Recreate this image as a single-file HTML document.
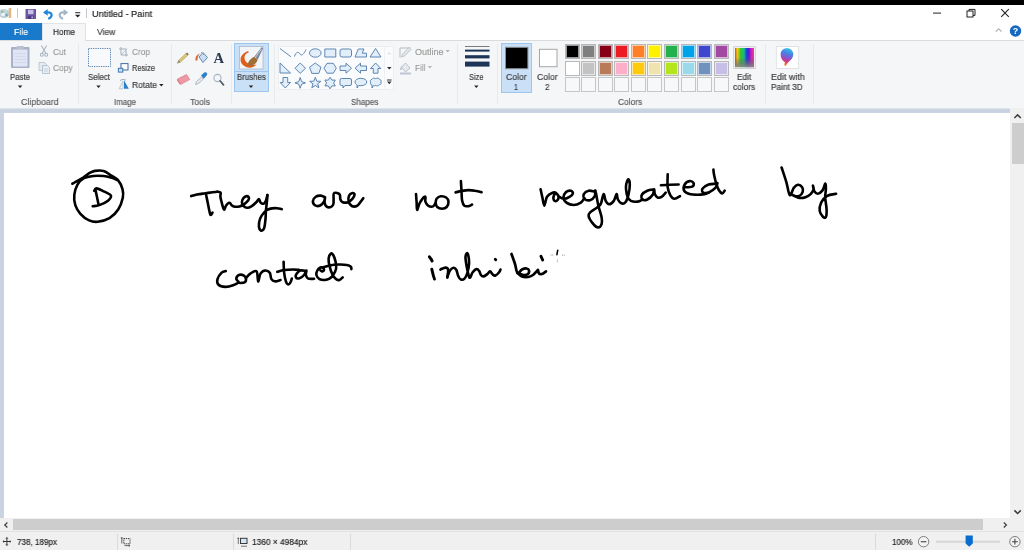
<!DOCTYPE html>
<html>
<head>
<meta charset="utf-8">
<style>
*{box-sizing:border-box;margin:0;padding:0}
html,body{width:1024px;height:550px;overflow:hidden;background:#fff;font-family:"Liberation Sans",sans-serif;}
#root{position:fixed;left:0;top:0;width:1024px;height:550px;overflow:hidden;background:#fff}
.abs{position:absolute}
.t{-webkit-text-stroke:0.18px currentColor;will-change:transform;position:absolute;white-space:nowrap;font-size:9px;color:#444;line-height:10px;transform-origin:0 50%}
svg{position:absolute;overflow:visible;will-change:transform}
#topbar{left:0;top:0;width:1024px;height:5px;background:#000}
#title{left:0;top:5px;width:1024px;height:18px;background:#fff}
#tabs{left:0;top:23px;width:1024px;height:17px;background:#fff}
#filetab{left:0;top:23px;width:42px;height:17px;background:#1979ca}
#hometab{left:42px;top:23px;width:44px;height:18px;background:#f5f6f7;border:1px solid #e2e3e4;border-bottom:none}
#ribbon{left:0;top:40px;width:1024px;height:68px;background:#f5f6f7;border-top:1px solid #dadbdc}
#band{left:0;top:108px;width:1010px;height:5px;background:linear-gradient(#dfe4ec 0,#dfe4ec 1px,#c9d3e2 1px,#c7d1e0 5px)}
#work{left:0;top:112px;width:1010px;height:406px;background:#c9d3e2}
#canvas{left:4px;top:113px;width:1006px;height:405px;background:#fff}
#vscroll{left:1010px;top:108px;width:14px;height:410px;background:#f0f0f0}
#vthumb{left:1012px;top:123px;width:12px;height:41px;background:#cdcdcd}
#hscroll{left:0;top:518px;width:1010px;height:13px;background:#f0f0f0}
#hthumb{left:13px;top:519px;width:970px;height:10.5px;background:#cdcdcd}
#corner{left:1010px;top:518px;width:14px;height:13px;background:#f0f0f0}
#status{left:0;top:531px;width:1024px;height:19px;background:#f0f0f0;border-top:1px solid #e2e2e2}
.sep{position:absolute;top:44px;width:1px;height:60px;background:#e9eaeb}
.ssep{position:absolute;top:534px;width:1px;height:16px;background:#dadada}
.sw{position:absolute;width:15px;height:15px;border:1px solid #b8b8b8;box-shadow:inset 0 0 0 1px rgba(255,255,255,0.6)}
.sw0{position:absolute;width:15px;height:15px;border:1px solid #c6c6c6;background:#f7f8f9}
</style>
</head>
<body>
<div id="root">
<div class="abs" id="topbar"></div>
<div class="abs" id="title"></div>
<div class="abs" id="tabs"></div>
<div class="abs" id="filetab"></div>
<div class="abs" id="ribbon"></div>
<div class="abs" id="hometab"></div>
<div class="abs" id="band"></div>
<div class="abs" id="work"></div>
<div class="abs" id="canvas"></div>
<div class="abs" id="vscroll"></div>
<div class="abs" id="vthumb"></div>
<div class="abs" id="hscroll"></div>
<div class="abs" id="hthumb"></div>
<div class="abs" id="corner"></div>
<div class="abs" id="status"></div>
<!-- separators -->
<div class="sep" style="left:78px"></div>
<div class="sep" style="left:171px"></div>
<div class="sep" style="left:231px"></div>
<div class="sep" style="left:274px"></div>
<div class="sep" style="left:457px"></div>
<div class="sep" style="left:497px"></div>
<div class="sep" style="left:765px"></div>
<div class="sep" style="left:813px"></div>
<!-- highlighted buttons -->
<div class="abs" style="left:234px;top:43px;width:35px;height:49px;background:#c9e0f7;border:1px solid #9cc6ee"></div>
<div class="abs" style="left:235px;top:71px;width:33px;height:1px;background:#9cc6ee"></div>
<div class="abs" style="left:501px;top:43px;width:31px;height:50px;background:#c9e0f7;border:1px solid #9cc6ee"></div>
<!-- shapes gallery -->
<div class="abs" style="left:278px;top:46px;width:116px;height:44px;background:#fafbfc;border:1px solid #eceef0"></div>
<div class="abs" style="left:384px;top:47px;width:1px;height:42px;background:#eff0f2"></div>
<svg width="1024" height="550" viewBox="0 0 1024 550" style="left:0;top:0">
<defs>
<linearGradient id="rb" x1="0" x2="1" y1="0" y2="0">
<stop offset="0" stop-color="#f03a1c"/><stop offset="0.12" stop-color="#f8d810"/><stop offset="0.3" stop-color="#30d028"/><stop offset="0.48" stop-color="#18c090"/><stop offset="0.6" stop-color="#1848e0"/><stop offset="0.72" stop-color="#5a18d8"/><stop offset="0.86" stop-color="#e018d0"/><stop offset="1" stop-color="#f04878"/>
</linearGradient>
<linearGradient id="rbk" x1="0" x2="0" y1="0" y2="1">
<stop offset="0" stop-color="#000" stop-opacity="0"/><stop offset="0.5" stop-color="#555" stop-opacity="0.12"/><stop offset="0.85" stop-color="#777" stop-opacity="0.75"/><stop offset="1" stop-color="#8a8a8a" stop-opacity="0.95"/>
</linearGradient>
<linearGradient id="p3d" x1="0.6" x2="0.35" y1="0" y2="1">
<stop offset="0" stop-color="#35bcea"/><stop offset="0.3" stop-color="#4a7fe0"/><stop offset="0.55" stop-color="#9050c8"/><stop offset="0.76" stop-color="#e03868"/><stop offset="1" stop-color="#f5a520"/>
</linearGradient>
</defs>
<!-- title bar: paint icon -->
<g>
<ellipse cx="4" cy="13.6" rx="5.8" ry="4.6" fill="#c2d0db"/>
<ellipse cx="3.2" cy="14.6" rx="2" ry="1.5" fill="#f2f5f7"/>
<circle cx="2.2" cy="11.6" r="1.2" fill="#8fbf7a"/><circle cx="5.6" cy="10.6" r="1.2" fill="#c8dbe8"/><circle cx="6.6" cy="15" r="1.5" fill="#79adc4"/>
<rect x="8.8" y="8.2" width="2.4" height="9.8" fill="#e6b877"/><rect x="8.8" y="8.2" width="2.4" height="2" fill="#d9b98a"/>
</g>
<rect x="17" y="8.5" width="1" height="9.5" fill="#c4c4cc"/>
<rect x="86" y="8.5" width="1" height="9.5" fill="#c4c4cc"/>
<!-- save -->
<g>
<rect x="25.5" y="9" width="10.5" height="10" fill="#6d55a3"/>
<rect x="28" y="9.8" width="5.5" height="4.4" fill="#c9c0e6"/>
<rect x="28" y="15.8" width="5.5" height="3.2" fill="#4d3a80"/>
<rect x="31.5" y="16.4" width="1.3" height="2" fill="#c9c0e6"/>
</g>
<!-- undo -->
<path d="M47 12.4 C50.4 11.9 52 13.8 51.6 15.6 C51.2 17.4 49.9 18.4 48.2 18.8" stroke="#1f86d8" stroke-width="2.2" fill="none"/>
<path d="M43 12.4 L47.7 9 L47.7 15.7 Z" fill="#1f86d8"/>
<!-- redo -->
<path d="M64.3 12.4 C60.9 11.9 59.3 13.8 59.7 15.6 C60.1 17.4 61.4 18.4 63.1 18.8" stroke="#a3b6c9" stroke-width="2.2" fill="none"/>
<path d="M68.3 12.4 L63.6 9 L63.6 15.7 Z" fill="#a3b6c9"/>
<!-- qat dropdown -->
<rect x="75.2" y="12.2" width="5" height="1" fill="#222"/>
<path d="M75 14.7 L80.4 14.7 L77.7 17.4 Z" fill="#222"/>
<!-- window controls -->
<rect x="933" y="12.6" width="8" height="1" fill="#222"/>
<rect x="967" y="11" width="6" height="6" fill="#fff" stroke="#222" stroke-width="1"/>
<path d="M969 11 L969 9.4 L975 9.4 L975 15.4 L973 15.4" fill="none" stroke="#222" stroke-width="1"/>
<path d="M1001.2 9.2 L1008.8 16.8 M1008.8 9.2 L1001.2 16.8" stroke="#222" stroke-width="1.1" fill="none"/>
<!-- help + caret -->
<circle cx="1015.5" cy="31" r="5.7" fill="#1468c0"/>
<text x="1015.5" y="34.3" font-size="9" font-weight="bold" fill="#fff" text-anchor="middle" font-family="Liberation Sans">?</text>
<path d="M995.8 31.6 L998.7 28.8 L1001.6 31.6" stroke="#b4b4b4" stroke-width="1.3" fill="none"/>
<!-- paste icon -->
<g>
<rect x="11" y="47" width="18.5" height="21" rx="1" fill="#a9b1c6"/>
<rect x="13" y="49.5" width="14.5" height="17" fill="#dfe5f5"/>
<rect x="16.5" y="46" width="7.5" height="3" rx="1" fill="#b9c0d2"/>
<path d="M14.5 53.5H26M14.5 56.5H26M14.5 59.5H26M14.5 62.5H26" stroke="#cfd6ea" stroke-width="0.8"/>
</g>
<path d="M17.9 85.4 L22.3 85.4 L20.1 87.9 Z" fill="#222"/>
<!-- cut -->
<g stroke="#a7b3c2" fill="none" stroke-width="1.05">
<path d="M41.3 45.5 L46 53.5 M46.6 45.5 L42 53.5"/>
<circle cx="41.8" cy="54.8" r="1.5"/><circle cx="46.2" cy="54.8" r="1.5"/>
</g>
<!-- copy -->
<g>
<path d="M39 62.5 H44.5 L46.5 64.5 V70.5 H39 Z" fill="#e6ebf2" stroke="#b3bfcd" stroke-width="0.8"/>
<path d="M42.5 65.5 H47.5 L49.5 67.5 V73.5 H42.5 Z" fill="#e9eef5" stroke="#a9b7c8" stroke-width="0.8"/>
<path d="M44 69H48M44 71H48" stroke="#b9c6d6" stroke-width="0.7"/>
</g>
<!-- select -->
<rect x="88.5" y="48.5" width="22" height="18" fill="#f7f9fc" stroke="#5c86b0" stroke-width="1" stroke-dasharray="1.3 1"/>
<path d="M96.3 85.4 L100.7 85.4 L98.5 87.9 Z" fill="#222"/>
<!-- crop -->
<g stroke="#a3aebb" fill="none" stroke-width="1">
<path d="M121 47 V55 H128 M119 49 H126 V56.5"/>
<path d="M122 54 L127 48.5" stroke="#b9c2cc"/>
</g>
<!-- resize -->
<g>
<rect x="121" y="63.6" width="7" height="6.4" fill="#fff" stroke="#3e6d9e" stroke-width="1"/>
<rect x="118.4" y="68.3" width="4.4" height="3.8" fill="#cfe2f5" stroke="#3e78b4" stroke-width="1"/>
</g>
<!-- rotate -->
<g>
<path d="M119.2 88.8 L123 81 L123 88.8 Z" fill="#f2f4f6" stroke="#b4bcc6" stroke-width="0.8"/>
<path d="M124 88.8 L124 80.3 L128.8 88.8 Z" fill="#2f7fc8"/>
<path d="M120 80.6 C121.5 79.2 124 79.2 126 80.2" stroke="#8a96a4" stroke-width="0.8" fill="none"/>
</g>
<path d="M159.1 84.0 L163.5 84.0 L161.3 86.5 Z" fill="#222"/>
<!-- TOOLS -->
<!-- pencil -->
<g>
<path d="M177.3 63.3 L178.8 60.2 L185.8 53.6 L187.6 55.4 L180.6 62 Z" fill="#dcc873" stroke="#a99a5e" stroke-width="0.6"/>
<path d="M185.8 53.6 L187 52.5 L188.8 54.3 L187.6 55.4 Z" fill="#8a6f66"/>
<path d="M177.3 63.3 L178.8 60.2 L180.6 62 Z" fill="#8d8a80"/>
</g>
<!-- fill bucket -->
<g>
<path d="M199 57 L203 52.5 L207.5 57.5 L203 62.5 Z" fill="#c9def2" stroke="#5f88b4" stroke-width="1"/>
<path d="M195.5 60.5 C195 57 197 54.5 200 53.5 C198 55.5 197.5 58 197.5 60.5 Z" fill="#d96a3a"/>
<path d="M201 52 L204 55" stroke="#7f98b4" stroke-width="0.8"/>
</g>
<!-- text A -->
<text x="218.8" y="63" font-family="Liberation Serif" font-weight="bold" font-size="14.6" fill="#2b3a55" text-anchor="middle">A</text>
<!-- eraser -->
<g>
<path d="M177.5 79 L186.5 74.5 L189.8 79.5 L181 84.3 Z" fill="#ee9aa6" stroke="#d9707f" stroke-width="0.6"/>
<path d="M177.5 79 L181 84.3 L180 84.8 L176.8 80 Z" fill="#d9707f"/>
</g>
<!-- picker -->
<g>
<path d="M195.5 84.5 L196.5 81.5 L201.5 77 L203.5 79 L198.5 83.5 Z" fill="#e4e8ee" stroke="#9aa3ae" stroke-width="0.7"/>
<path d="M201 75.5 L204 72.8 C205 72 206.5 72.3 207 73.3 C207.5 74.3 207 75.5 206 76.3 L203.8 78.8 Z" fill="#2f7fc8"/>
</g>
<!-- magnifier -->
<g>
<circle cx="217.5" cy="78" r="3.6" fill="#f2f6fa" stroke="#a8b4c0" stroke-width="1.1"/>
<path d="M220.2 81 L223.5 84.8" stroke="#55606c" stroke-width="1.8" stroke-linecap="round"/>
</g>
<!-- brushes icon -->
<g>
<rect x="239.5" y="46.5" width="23.5" height="22.5" fill="#f1f4f8" stroke="#aab9cc" stroke-width="0.8"/>
<path d="M248.6 51 C246.5 51.6 243 53 241.2 56.5 C239.6 60 241 64.6 245.5 66.8 C249.5 68.6 254.2 67.6 256.5 64.5 C253 65.6 249.6 64.8 247.2 62.8 C244.4 60.4 243.6 57 245.6 54.4 C246.4 53.4 247.8 52.8 249 52.6 C248.2 52.2 248.2 51.4 248.6 51 Z" fill="#de5f1a"/>
<path d="M247.5 64.5 C248.5 61 251 58 254.5 56.5 L257.5 60 C256.5 63.5 253 66 249.5 66.3 Z" fill="#a06d35"/>
<path d="M254.5 56.5 L261.8 47 L263 48.5 L257.5 60 Z" fill="#7d8696"/>
<path d="M255 58 L261.5 49" stroke="#dfe4ec" stroke-width="0.8"/>
</g>
<path d="M248.8 85.4 L253.2 85.4 L251.0 87.9 Z" fill="#222"/>
<!-- SHAPES -->
<g fill="#e2eefa" stroke="#4f7ba8" stroke-width="0.9" stroke-linejoin="round">
<path d="M280 48.5 L291 56.8" fill="none"/>
<path d="M294.5 56.5 C296 51.5 298.5 51.5 300 54 C301.5 56.5 304 54 306 49.5" fill="none"/>
<ellipse cx="315.3" cy="53" rx="5.8" ry="4.2"/>
<rect x="324.8" y="49" width="11" height="8"/>
<rect x="340" y="49" width="11.5" height="8" rx="2"/>
<path d="M355 57 L358.3 49 L363.9 49 L362.3 53.2 L366.5 53.2 L366.5 57 Z"/>
<path d="M370 57 L375.6 48.5 L381 57 Z"/>
<path d="M280 63 L280 73 L290.5 73 Z"/>
<path d="M300.2 63 L305.5 68.2 L300.2 73.4 L295 68.2 Z"/>
<path d="M315.3 63 L321 67.2 L318.8 73.4 L311.8 73.4 L309.6 67.2 Z"/>
<path d="M327 63.3 L333.3 63.3 L336.3 68.2 L333.3 73.2 L327 73.2 L324 68.2 Z"/>
<path d="M340 66 L346 66 L346 63.2 L351.5 68.2 L346 73.2 L346 70.5 L340 70.5 Z"/>
<path d="M366.5 66 L360.5 66 L360.5 63.2 L355 68.2 L360.5 73.2 L360.5 70.5 L366.5 70.5 Z"/>
<path d="M373.3 73.2 L373.3 68.5 L370.5 68.5 L375.6 63 L380.8 68.5 L378 68.5 L378 73.2 Z"/>
<path d="M283 77.5 L283 82.5 L280.2 82.5 L285.3 88 L290.5 82.5 L287.7 82.5 L287.7 77.5 Z"/>
<path d="M300.2 77.5 L301.6 81.6 L305.5 82.9 L301.6 84.2 L300.2 88.3 L298.8 84.2 L295 82.9 L298.8 81.6 Z"/>
<path d="M315.3 77.3 L316.8 81.2 L320.9 81.3 L317.7 83.8 L318.8 87.8 L315.3 85.5 L311.8 87.8 L312.9 83.8 L309.7 81.3 L313.8 81.2 Z"/>
<path d="M330.1 77.2 L331.9 80.1 L335.3 80.1 L333.6 83 L335.3 85.9 L331.9 85.9 L330.1 88.8 L328.3 85.9 L324.9 85.9 L326.6 83 L324.9 80.1 L328.3 80.1 Z"/>
<path d="M341.5 78.5 H350 Q351.5 78.5 351.5 80 V84 Q351.5 85.5 350 85.5 H345 L343 88 L343 85.5 H341.5 Q340 85.5 340 84 V80 Q340 78.5 341.5 78.5 Z"/>
<path d="M360.9 78.3 C364.3 78.3 366.8 80 366.8 82 C366.8 84 364.3 85.7 360.9 85.7 C360.2 85.7 359.5 85.6 358.9 85.5 L357 88 L357.2 85 C355.9 84.3 355 83.2 355 82 C355 80 357.5 78.3 360.9 78.3 Z"/>
<path d="M372 79.3 C372.5 78 374.5 77.8 375.6 78.6 C376.8 77.8 379 78 379.5 79.3 C381 79.5 381.6 81 380.8 82 C381.6 83.2 380.8 84.8 379.3 84.8 C378.6 86 376.5 86.2 375.6 85.4 C375 85.9 374 86 373.3 85.7 L372 88 L372 85 C370.6 84.8 370 83.3 370.6 82.2 C369.8 81.2 370.5 79.5 372 79.3 Z"/>
</g>
<!-- gallery scroll arrows -->
<path d="M388 54.2 L389.3 53 L390.6 54.2" fill="none" stroke="#c6cace" stroke-width="1"/>
<path d="M387 67 L391.6 67 L389.3 69.6 Z" fill="#333"/>
<rect x="387" y="79.5" width="4.6" height="1" fill="#333"/>
<path d="M387 81.6 L391.6 81.6 L389.3 84.2 Z" fill="#333"/>
<!-- outline / fill -->
<g>
<path d="M400 57.5 L400 48 L410.5 48" fill="none" stroke="#b4b9bf" stroke-width="1"/>
<path d="M401.5 57 L402.5 54 L409 47.5 L411 49.5 L404.5 56 Z" fill="#e2e4e7" stroke="#b0b5bb" stroke-width="0.7"/>
<path d="M445.6 50 L449.8 50 L447.7 52.4 Z" fill="#b4b4b4"/>
<path d="M401.5 67.5 L405.5 63 L410 68 L405.5 72 Z" fill="#e6eaef" stroke="#aeb6c0" stroke-width="0.8"/>
<path d="M399.8 70 C400 67.5 401 66 403 65 C402 66.5 401.8 68.5 401.8 70 Z" fill="#c5cbd3"/>
<rect x="400" y="72.5" width="11" height="2" fill="#bcc6d2"/>
<path d="M427.8 66 L432 66 L429.9 68.4 Z" fill="#b4b4b4"/>
</g>
<!-- size -->
<g>
<rect x="465" y="46" width="24.5" height="1" fill="#7b7b7b"/>
<rect x="465" y="49.6" width="24.5" height="2" fill="#1d3557"/>
<rect x="465" y="55.2" width="24.5" height="3.2" fill="#1d3557"/>
<rect x="465" y="61.6" width="24.5" height="5" fill="#1d3557"/>
</g>
<path d="M474.1 85.4 L478.5 85.4 L476.3 87.9 Z" fill="#222"/>
<!-- color1, color2 -->
<rect x="505.5" y="47.3" width="22.4" height="21.4" fill="#000" stroke="#8a8f96" stroke-width="1"/>
<rect x="539.5" y="49.3" width="17.5" height="17.4" fill="#fff" stroke="#a5a5a5" stroke-width="1"/>
<!-- edit colors -->
<rect x="733.8" y="46.8" width="21.4" height="21.6" fill="#fbfbfb" stroke="#c4c4c4" stroke-width="0.8"/>
<rect x="735" y="48" width="19" height="19.2" fill="url(#rb)"/>
<rect x="735" y="48" width="19" height="19.2" fill="url(#rbk)"/>
<!-- paint 3d -->
<rect x="776.3" y="46.5" width="22.4" height="22" fill="#fff" stroke="#dcdcdc" stroke-width="0.8"/>
<path d="M787 48.3 C790.8 48.3 793.3 51 793.3 54.3 C793.3 58 790.5 60.5 788 62.5 C787 63.3 786.6 64.5 786.3 65.3 C786 66.3 784.6 66.4 784.4 65.3 C784.2 64.3 784.6 63.2 785 62.3 C782.6 60.8 780.6 58 780.6 54.5 C780.6 51 783.2 48.3 787 48.3 Z" fill="url(#p3d)"/>
</svg>
<!-- palette -->
<div class="sw" style="left:564.6px;top:44.3px;background:#000000"></div>
<div class="sw" style="left:564.6px;top:60.7px;background:#ffffff"></div>
<div class="sw0" style="left:564.6px;top:77.1px"></div>
<div class="sw" style="left:581.1px;top:44.3px;background:#7f7f7f"></div>
<div class="sw" style="left:581.1px;top:60.7px;background:#c3c3c3"></div>
<div class="sw0" style="left:581.1px;top:77.1px"></div>
<div class="sw" style="left:597.7px;top:44.3px;background:#880015"></div>
<div class="sw" style="left:597.7px;top:60.7px;background:#b97a57"></div>
<div class="sw0" style="left:597.7px;top:77.1px"></div>
<div class="sw" style="left:614.2px;top:44.3px;background:#ed1c24"></div>
<div class="sw" style="left:614.2px;top:60.7px;background:#ffaec9"></div>
<div class="sw0" style="left:614.2px;top:77.1px"></div>
<div class="sw" style="left:630.8px;top:44.3px;background:#ff7f27"></div>
<div class="sw" style="left:630.8px;top:60.7px;background:#ffc90e"></div>
<div class="sw0" style="left:630.8px;top:77.1px"></div>
<div class="sw" style="left:647.4px;top:44.3px;background:#fff200"></div>
<div class="sw" style="left:647.4px;top:60.7px;background:#efe4b0"></div>
<div class="sw0" style="left:647.4px;top:77.1px"></div>
<div class="sw" style="left:663.9px;top:44.3px;background:#22b14c"></div>
<div class="sw" style="left:663.9px;top:60.7px;background:#b5e61d"></div>
<div class="sw0" style="left:663.9px;top:77.1px"></div>
<div class="sw" style="left:680.5px;top:44.3px;background:#00a2e8"></div>
<div class="sw" style="left:680.5px;top:60.7px;background:#99d9ea"></div>
<div class="sw0" style="left:680.5px;top:77.1px"></div>
<div class="sw" style="left:697.0px;top:44.3px;background:#3f48cc"></div>
<div class="sw" style="left:697.0px;top:60.7px;background:#7092be"></div>
<div class="sw0" style="left:697.0px;top:77.1px"></div>
<div class="sw" style="left:713.6px;top:44.3px;background:#a349a4"></div>
<div class="sw" style="left:713.6px;top:60.7px;background:#c8bfe7"></div>
<div class="sw0" style="left:713.6px;top:77.1px"></div>

<!-- LABELS -->
<div class="t" style="left:92.0px;top:8.5px;color:#1a1a1a;font-size:9.4px;transform:scaleX(0.976)">Untitled - Paint</div>
<div class="t" style="left:14.0px;top:26.7px;color:#ffffff;font-size:9px;transform:scaleX(0.964)">File</div>
<div class="t" style="left:53.0px;top:26.7px;color:#2a2a2a;font-size:9px;transform:scaleX(0.916)">Home</div>
<div class="t" style="left:96.5px;top:26.7px;color:#444;font-size:9px;transform:scaleX(0.956)">View</div>
<div class="t" style="left:10.0px;top:72.1px;color:#3c3c3c;font-size:9px;transform:scaleX(0.869)">Paste</div>
<div class="t" style="left:53.0px;top:46.7px;color:#9a9a9a;font-size:9px;transform:scaleX(0.928)">Cut</div>
<div class="t" style="left:53.0px;top:62.7px;color:#9a9a9a;font-size:9px;transform:scaleX(0.928)">Copy</div>
<div class="t" style="left:20.8px;top:96.7px;color:#5a5a5a;font-size:9px;transform:scaleX(0.978)">Clipboard</div>
<div class="t" style="left:87.5px;top:72.1px;color:#3c3c3c;font-size:9px;transform:scaleX(0.879)">Select</div>
<div class="t" style="left:132.0px;top:46.7px;color:#9a9a9a;font-size:9px;transform:scaleX(0.922)">Crop</div>
<div class="t" style="left:132.0px;top:62.7px;color:#3c3c3c;font-size:9px;transform:scaleX(0.836)">Resize</div>
<div class="t" style="left:132.0px;top:79.7px;color:#3c3c3c;font-size:9px;transform:scaleX(0.942)">Rotate</div>
<div class="t" style="left:114.0px;top:96.7px;color:#5a5a5a;font-size:9px;transform:scaleX(0.879)">Image</div>
<div class="t" style="left:190.2px;top:96.7px;color:#5a5a5a;font-size:9px;transform:scaleX(0.952)">Tools</div>
<div class="t" style="left:236.8px;top:72.1px;color:#3c3c3c;font-size:9px;transform:scaleX(0.875)">Brushes</div>
<div class="t" style="left:351.4px;top:96.7px;color:#5a5a5a;font-size:9px;transform:scaleX(0.897)">Shapes</div>
<div class="t" style="left:414.6px;top:46.7px;color:#9a9a9a;font-size:9px;transform:scaleX(1.002)">Outline</div>
<div class="t" style="left:414.6px;top:62.7px;color:#9a9a9a;font-size:9px;transform:scaleX(0.922)">Fill</div>
<div class="t" style="left:468.9px;top:72.1px;color:#3c3c3c;font-size:9px;transform:scaleX(0.828)">Size</div>
<div class="t" style="left:505.8px;top:72.1px;color:#3c3c3c;font-size:9px;transform:scaleX(0.962)">Color</div>
<div class="t" style="left:514.0px;top:81.7px;color:#3c3c3c;font-size:9px;transform:scaleX(0.798)">1</div>
<div class="t" style="left:537.0px;top:72.1px;color:#3c3c3c;font-size:9px;transform:scaleX(0.962)">Color</div>
<div class="t" style="left:545.0px;top:81.7px;color:#3c3c3c;font-size:9px;transform:scaleX(0.897)">2</div>
<div class="t" style="left:618.0px;top:96.7px;color:#5a5a5a;font-size:9px;transform:scaleX(0.930)">Colors</div>
<div class="t" style="left:736.5px;top:72.1px;color:#3c3c3c;font-size:9px;transform:scaleX(0.915)">Edit</div>
<div class="t" style="left:732.9px;top:81.7px;color:#3c3c3c;font-size:9px;transform:scaleX(0.924)">colors</div>
<div class="t" style="left:770.6px;top:72.1px;color:#3c3c3c;font-size:9px;transform:scaleX(0.991)">Edit with</div>
<div class="t" style="left:771.0px;top:81.7px;color:#3c3c3c;font-size:9px;transform:scaleX(0.918)">Paint 3D</div>
<div class="t" style="left:17.0px;top:536.5px;color:#222;font-size:9px;transform:scaleX(0.898)">738, 189px</div>
<div class="t" style="left:252.0px;top:536.7px;color:#222;font-size:9px;transform:scaleX(0.926)">1360 × 4984px</div>
<div class="t" style="left:891.5px;top:536.7px;color:#222;font-size:9px;transform:scaleX(0.890)">100%</div>
<!-- STATUS -->
<div class="ssep" style="left:117px"></div>
<div class="ssep" style="left:233px"></div>
<div class="ssep" style="left:350px"></div>
<div class="ssep" style="left:875px"></div>
<svg width="1024" height="550" viewBox="0 0 1024 550" style="left:0;top:0">
<!-- scroll arrows -->
<path d="M1014.4 118 L1017.6 114.9 L1020.8 118" fill="none" stroke="#3a3a3a" stroke-width="1.5"/>
<path d="M1014.4 510.4 L1017.6 513.5 L1020.8 510.4" fill="none" stroke="#3a3a3a" stroke-width="1.5"/>
<path d="M7.4 522.5 L4.8 525 L7.4 527.5" fill="none" stroke="#444" stroke-width="1.3"/>
<path d="M1003.8 522.5 L1006.4 525 L1003.8 527.5" fill="none" stroke="#444" stroke-width="1.3"/>
<!-- cursor pos icon -->
<path d="M6.9 537.6 V545.4 M3 541.5 H10.8" stroke="#333" stroke-width="1" fill="none"/>
<path d="M5.9 538.7 L6.9 537.5 L7.9 538.7 M5.9 544.3 L6.9 545.5 L7.9 544.3 M4.1 540.5 L2.9 541.5 L4.1 542.5 M9.7 540.5 L10.9 541.5 L9.7 542.5" stroke="#333" stroke-width="0.8" fill="none"/>
<!-- selection size icon -->
<rect x="123.8" y="538.6" width="6.2" height="5.2" fill="none" stroke="#333" stroke-width="1" stroke-dasharray="1.2 0.8"/>
<path d="M121.8 537.2 V543.5 M120.8 538 H122.8" stroke="#444" stroke-width="0.8"/>
<path d="M124.5 545.6 H130 M128.8 544.8 L130 545.6 L128.8 546.4" stroke="#444" stroke-width="0.8" fill="none"/>
<!-- image size icon -->
<rect x="240.5" y="538.3" width="6.5" height="5.2" fill="#d4e6f7" stroke="#3a3a3a" stroke-width="1"/>
<path d="M238.3 537.5 V544 M237.3 538.4 H239.3" stroke="#555" stroke-width="0.8"/>
<path d="M241 546.2 H247" stroke="#555" stroke-width="0.8"/>
<!-- zoom controls -->
<circle cx="923.6" cy="541.7" r="5.2" fill="#f4f4f4" stroke="#7a7a7a" stroke-width="1"/>
<rect x="920.8" y="541.2" width="5.6" height="1.1" fill="#444"/>
<rect x="936" y="540.7" width="64" height="2" fill="#d6d6d6"/>
<path d="M965.6 535.6 H972.8 V543.6 L969.2 546.8 L965.6 543.6 Z" fill="#0a6cd0"/>
<circle cx="1014.9" cy="541.7" r="5.2" fill="#f4f4f4" stroke="#7a7a7a" stroke-width="1"/>
<path d="M1012 541.7 H1017.8 M1014.9 538.8 V544.6" stroke="#444" stroke-width="1.1"/>
</svg>

<!-- INK -->
<svg width="1024" height="550" viewBox="0 0 1024 550" style="left:0;top:0">
<g fill="none" stroke="#000" stroke-linecap="round" stroke-linejoin="round">
<path d="M72.4 183.7 C73.2 183.2 75.7 181.8 77.5 180.8 C79.3 179.8 81.5 178.9 83.3 177.7 C85.1 176.5 86.6 174.7 88.5 173.6 C90.4 172.5 92.4 171.3 94.9 170.9 C97.4 170.5 100.9 170.2 103.6 170.9 C106.3 171.6 108.5 173.7 110.9 175.3 C113.3 176.9 116.3 178.1 118.2 180.4 C120.1 182.7 121.7 186.2 122.5 189.1 C123.3 192.0 123.5 194.4 122.8 197.8 C122.1 201.2 120.4 206.1 118.2 209.5 C116.0 212.9 112.9 216.1 109.5 218.2 C106.1 220.2 101.2 221.4 97.8 221.8 C94.4 222.2 92.0 221.7 89.1 220.4 C86.2 219.1 82.7 216.4 80.4 213.8 C78.1 211.2 76.3 208.2 75.3 205.1 C74.3 201.9 73.9 198.3 74.3 194.9 C74.7 191.5 75.9 187.5 77.5 184.7 C79.1 181.9 81.3 179.6 84.0 178.2 C86.7 176.8 90.2 176.4 93.5 176.0 C96.8 175.6 100.7 175.8 103.6 176.0 C106.5 176.2 108.5 176.8 110.9 177.5 C113.3 178.2 117.0 179.9 118.2 180.4" stroke-width="2.6"/>
<path d="M95.6 190.2 C95.8 191.3 96.5 194.7 97.0 197.0 C97.5 199.3 98.2 203.0 98.5 204.2" stroke-width="2.6"/>
<path d="M94.2 190.8 C94.6 190.4 94.8 188.3 96.4 188.4 C98.0 188.5 101.2 190.1 103.6 191.3 C106.0 192.5 110.2 194.0 110.9 195.6 C111.6 197.2 109.9 199.1 108.0 200.7 C106.1 202.3 101.8 204.2 99.3 205.1 C96.8 206.0 93.8 206.1 92.7 206.3" stroke-width="2.6"/>
<path d="M191.2 196.1 C192.2 195.8 195.1 195.0 197.0 194.6 C198.9 194.2 200.7 193.9 202.9 193.6 C205.1 193.3 207.6 192.9 210.0 192.6 C212.4 192.3 216.1 191.8 217.3 191.7" stroke-width="2.6"/>
<path d="M206.1 194.8 C206.4 196.3 207.3 200.7 208.0 204.0 C208.7 207.3 209.6 213.2 210.3 214.6 C211.1 216.0 212.1 212.9 212.5 212.6" stroke-width="2.6"/>
<path d="M217.3 191.7 C217.9 191.8 220.1 191.8 220.6 192.6 C221.1 193.4 220.2 194.8 220.4 196.7 C220.6 198.5 221.4 201.5 222.0 203.7 C222.6 205.8 223.3 209.3 224.0 209.6 C224.7 209.9 225.3 206.6 226.1 205.5 C226.9 204.4 228.0 203.3 228.7 202.9 C229.4 202.5 229.7 202.8 230.2 203.2 C230.7 203.6 231.1 204.9 231.9 205.5 C232.7 206.1 233.5 206.5 234.8 206.7 C236.1 206.8 238.1 206.7 239.5 206.4 C240.9 206.1 242.1 205.4 243.0 204.9 C243.9 204.4 243.9 204.5 244.8 203.7 C245.7 202.9 247.6 201.2 248.3 200.2 C249.0 199.2 249.2 198.3 248.9 197.6 C248.6 196.9 247.5 196.0 246.6 196.1 C245.7 196.2 244.4 196.9 243.6 197.9 C242.8 198.9 241.9 200.6 241.9 202.0 C241.9 203.4 242.7 205.1 243.6 206.1 C244.5 207.1 245.8 207.8 247.2 207.8 C248.6 207.8 250.2 207.1 251.8 206.1 C253.4 205.1 255.3 203.2 256.5 202.0 C257.7 200.8 258.2 199.0 258.9 199.1 C259.6 199.2 259.8 201.8 260.6 202.6 C261.4 203.4 262.7 204.0 263.6 203.7 C264.5 203.4 265.3 202.2 265.9 200.8 C266.5 199.4 267.1 196.0 267.4 195.0" stroke-width="2.6"/>
<path d="M267.4 195.0 C267.3 196.3 267.1 200.0 266.8 202.6 C266.6 205.2 266.1 208.1 265.9 210.8 C265.7 213.5 265.8 216.0 265.5 219.0 C265.2 222.0 264.8 226.7 264.0 228.6 C263.2 230.5 261.7 230.9 260.8 230.5 C259.9 230.1 259.0 228.0 258.9 226.0 C258.8 224.0 259.3 220.7 260.2 218.4 C261.1 216.1 263.2 213.5 264.5 212.0 C265.8 210.5 266.8 210.1 268.0 209.5 C269.2 208.9 270.5 208.6 272.0 208.4 C273.5 208.2 275.4 208.1 277.0 208.2 C278.6 208.3 281.0 209.0 281.8 209.2" stroke-width="2.6"/>
<path d="M325.1 197.3 C324.4 197.0 322.2 195.7 320.7 195.6 C319.1 195.5 317.1 195.8 315.8 196.7 C314.5 197.6 313.0 199.6 312.9 201.1 C312.8 202.6 314.1 204.8 315.3 205.5 C316.5 206.2 318.8 206.1 320.2 205.5 C321.6 204.9 323.2 203.1 324.0 201.7 C324.8 200.3 325.0 197.1 325.1 197.3 C325.2 197.5 324.3 201.1 324.6 202.7 C324.9 204.2 325.7 205.9 326.7 206.6 C327.7 207.3 329.5 207.5 330.6 207.1 C331.7 206.7 332.8 205.7 333.3 204.4 C333.8 203.1 333.5 201.3 333.6 199.5 C333.7 197.7 333.2 194.6 333.8 193.5 C334.4 192.4 336.1 192.7 337.1 192.9 C338.1 193.1 339.2 193.5 339.8 194.6 C340.4 195.7 339.9 198.2 340.4 199.5 C340.9 200.8 341.3 201.8 342.6 202.2 C343.9 202.6 346.4 202.8 348.0 202.2 C349.6 201.6 351.3 200.2 352.4 198.9 C353.5 197.6 354.6 195.6 354.6 194.6 C354.6 193.6 353.3 192.9 352.4 193.1 C351.5 193.3 349.7 194.2 349.1 195.6 C348.5 197.0 348.2 200.0 348.6 201.7 C349.1 203.4 350.4 205.3 351.8 206.0 C353.2 206.7 355.4 206.6 356.8 206.0 C358.2 205.4 358.9 204.0 360.0 202.7 C361.1 201.4 362.8 198.9 363.3 198.2" stroke-width="2.6"/>
<path d="M416.0 194.0 C416.1 195.3 416.4 199.3 416.6 202.0 C416.8 204.7 416.6 209.7 417.1 209.9 C417.6 210.2 418.5 205.5 419.5 203.5 C420.5 201.5 422.0 199.2 423.0 198.1 C424.0 197.0 425.0 196.3 425.4 196.9 C425.8 197.5 424.9 200.1 425.4 201.6 C425.9 203.1 427.1 205.0 428.4 205.8 C429.7 206.6 431.9 206.9 433.1 206.4 C434.3 205.9 434.9 204.1 435.5 202.8 C436.1 201.5 435.7 199.8 436.6 198.7 C437.5 197.6 439.2 196.5 440.8 196.3 C442.4 196.1 444.8 196.6 446.1 197.5 C447.4 198.4 448.4 200.0 448.5 201.6 C448.6 203.2 447.8 205.8 446.7 207.0 C445.6 208.2 443.6 208.7 442.0 208.7 C440.4 208.7 438.3 208.0 437.2 207.0 C436.1 206.0 435.8 203.5 435.5 202.8" stroke-width="2.6"/>
<path d="M460.9 181.0 C461.0 182.7 461.3 187.8 461.5 191.0 C461.7 194.2 461.6 198.0 462.1 200.5 C462.6 203.0 463.3 204.9 464.4 205.8 C465.5 206.7 467.3 206.3 468.6 206.1 C469.9 205.9 471.5 204.8 472.1 204.6" stroke-width="2.6"/>
<path d="M455.6 192.4 C456.7 192.2 459.8 191.3 462.0 190.9 C464.2 190.5 466.4 190.1 468.6 190.1 C470.8 190.1 472.8 190.3 475.0 190.7 C477.2 191.0 480.5 191.9 481.6 192.2" stroke-width="2.6"/>
<path d="M540.6 189.3 C540.9 190.7 541.8 194.8 542.4 197.5 C543.0 200.2 543.5 205.8 544.3 205.7 C545.1 205.6 545.6 199.0 547.0 196.8 C548.4 194.6 550.9 193.3 552.5 192.7 C554.1 192.1 555.6 192.6 556.6 193.4 C557.6 194.2 558.6 196.2 558.6 197.5 C558.6 198.8 557.4 200.5 556.6 200.9 C555.8 201.3 554.4 201.1 553.9 200.2 C553.4 199.3 553.4 196.5 553.9 195.4 C554.4 194.3 555.7 193.2 556.6 193.4 C557.5 193.6 558.0 195.9 559.3 196.8 C560.5 197.7 562.4 198.8 564.1 198.8 C565.8 198.8 568.0 197.7 569.5 196.8 C571.0 195.9 572.7 194.4 572.9 193.4 C573.1 192.4 572.0 190.9 570.9 190.7 C569.8 190.5 567.4 190.9 566.1 192.0 C564.9 193.1 563.3 195.7 563.4 197.5 C563.5 199.3 565.1 201.7 566.8 202.9 C568.5 204.2 571.3 205.0 573.6 205.0 C575.9 205.0 578.6 204.0 580.4 202.9 C582.2 201.8 583.8 199.0 584.5 198.2" stroke-width="2.6"/>
<path d="M594.1 191.4 C593.2 191.3 590.3 190.2 588.6 190.7 C586.9 191.1 584.5 192.8 583.8 194.1 C583.1 195.4 583.5 197.8 584.5 198.8 C585.5 199.8 588.3 200.6 590.0 200.2 C591.7 199.8 593.9 197.7 594.8 196.1 C595.7 194.5 594.8 189.2 595.4 190.7 C596.0 192.2 597.2 200.6 598.2 205.0 C599.2 209.4 601.0 214.1 601.6 217.3 C602.2 220.5 602.2 222.4 601.6 224.1 C601.0 225.8 599.6 227.5 598.2 227.5 C596.8 227.5 595.0 226.0 593.4 224.1 C591.8 222.2 589.0 217.9 588.6 215.9 C588.2 213.9 589.3 213.2 590.7 211.8 C592.1 210.4 595.1 209.1 596.8 207.7 C598.5 206.3 599.8 205.9 600.9 203.6 C602.0 201.3 602.8 194.5 603.6 194.1 C604.4 193.7 604.8 199.2 605.7 200.9 C606.6 202.6 607.8 204.3 609.1 204.3 C610.5 204.3 612.5 202.6 613.8 200.9 C615.0 199.2 615.9 194.3 616.6 194.1 C617.3 193.9 617.1 198.0 617.9 199.5 C618.7 201.0 620.0 202.8 621.3 203.3 C622.5 203.8 624.2 203.8 625.4 202.3 C626.6 200.8 627.9 197.1 628.6 194.1 C629.3 191.1 629.8 187.0 629.8 184.5 C629.8 182.0 628.9 179.5 628.3 179.3 C627.7 179.1 626.8 181.9 626.4 183.5 C626.0 185.1 625.8 186.8 626.0 189.0 C626.2 191.2 626.7 194.8 627.5 196.8 C628.3 198.8 629.2 200.1 630.9 200.9 C632.6 201.7 635.8 201.8 637.7 201.6 C639.6 201.4 641.7 199.8 642.5 199.5" stroke-width="2.6"/>
<path d="M654.1 189.3 C653.0 189.5 649.3 189.8 647.3 190.7 C645.2 191.6 642.6 193.3 641.8 194.8 C641.0 196.3 641.6 198.7 642.5 199.5 C643.4 200.3 645.6 200.3 647.3 199.5 C649.0 198.7 651.6 196.5 652.7 194.8 C653.8 193.1 653.8 189.4 654.1 189.3 C654.5 189.2 654.2 192.7 654.8 194.1 C655.4 195.5 656.4 197.1 657.5 197.5 C658.6 197.9 660.2 197.6 661.6 196.8 C663.0 196.0 665.0 193.4 665.7 192.7" stroke-width="2.6"/>
<path d="M667.7 174.3 C667.7 176.5 667.2 183.8 667.7 187.3 C668.2 190.8 669.3 193.5 670.4 195.4 C671.5 197.3 672.9 198.7 674.5 198.8 C676.1 198.9 679.1 196.6 680.0 196.1" stroke-width="2.6"/>
<path d="M660.9 185.2 C662.4 185.1 667.0 184.8 670.0 184.7 C673.0 184.6 677.2 184.5 678.6 184.5" stroke-width="2.6"/>
<path d="M684.1 187.3 C685.5 187.2 690.6 187.3 692.2 186.6 C693.8 185.9 694.1 184.1 693.6 183.2 C693.1 182.3 691.0 180.9 689.5 181.1 C688.0 181.3 685.6 182.9 684.7 184.5 C683.8 186.1 683.3 189.1 684.1 190.7 C684.9 192.3 687.2 193.4 689.5 194.1 C691.8 194.8 695.2 194.8 697.7 194.8 C700.2 194.8 702.7 194.4 704.5 194.1 C706.3 193.8 706.8 193.7 708.6 192.7 C710.4 191.7 713.9 189.5 715.4 187.9 C716.9 186.3 717.1 184.0 717.5 183.2" stroke-width="2.6"/>
<path d="M715.4 183.9 C714.3 184.0 710.8 183.7 708.6 184.5 C706.5 185.3 703.4 187.2 702.5 188.6 C701.6 190.0 702.2 192.0 703.2 192.7 C704.2 193.4 707.7 192.7 708.6 192.7" stroke-width="2.6"/>
<path d="M713.4 169.5 C713.5 170.4 713.6 172.7 714.1 175.0 C714.6 177.3 715.3 180.7 716.1 183.2 C716.9 185.7 717.8 188.3 718.8 190.0 C719.8 191.7 721.2 193.3 722.2 193.4 C723.2 193.5 724.3 191.1 724.7 190.7" stroke-width="2.6"/>
<path d="M781.6 167.5 C782.4 170.0 785.0 177.7 786.4 182.3 C787.8 186.9 788.5 194.3 789.8 195.2 C791.0 196.1 792.5 189.4 793.9 187.7 C795.2 185.9 796.5 184.8 797.9 184.7 C799.2 184.6 801.2 185.8 802.0 187.0 C802.8 188.2 803.2 190.3 802.7 191.8 C802.2 193.3 800.7 195.2 799.3 195.9 C797.9 196.6 796.0 196.2 794.5 195.9 C793.0 195.6 791.1 194.2 790.4 193.8" stroke-width="2.6"/>
<path d="M794.5 195.9 C795.3 196.2 797.5 197.7 799.3 197.9 C801.1 198.1 803.5 197.9 805.4 197.2 C807.3 196.5 809.5 195.2 810.9 193.8 C812.3 192.5 813.3 190.4 813.6 189.1 C813.9 187.8 812.8 185.4 812.9 185.7 C813.0 186.0 813.5 189.8 814.3 191.1 C815.1 192.4 816.3 193.9 817.7 193.8 C819.1 193.7 821.2 192.1 822.5 190.4 C823.8 188.7 824.6 183.8 825.2 183.6 C825.8 183.4 825.9 186.8 825.9 189.1 C825.9 191.4 825.1 193.8 825.2 197.2 C825.3 200.6 826.5 206.2 826.6 209.5 C826.7 212.8 826.5 215.8 825.9 217.0 C825.3 218.2 824.1 218.0 823.1 217.0 C822.1 216.0 820.0 213.3 819.7 210.9 C819.4 208.5 819.9 205.2 821.1 202.7 C822.4 200.2 824.7 197.4 827.2 195.9 C829.7 194.4 834.6 194.2 836.1 193.8" stroke-width="2.6"/>
<path d="M225.8 271.0 C225.1 271.3 222.8 271.4 221.4 272.8 C220.0 274.2 218.0 277.2 217.5 279.1 C217.0 281.1 217.0 283.2 218.3 284.5 C219.6 285.8 222.8 286.8 225.3 286.9 C227.8 287.0 230.9 286.1 233.1 285.3 C235.3 284.5 238.1 283.2 238.6 282.2 C239.1 281.2 236.3 280.3 236.3 279.1 C236.3 277.9 237.4 275.9 238.6 275.2 C239.8 274.5 242.1 274.7 243.3 275.2 C244.5 275.7 245.7 277.1 245.9 278.3 C246.2 279.5 245.8 281.4 244.8 282.2 C243.9 283.0 241.2 283.0 240.2 283.0 C239.2 283.0 238.9 282.3 238.6 282.2" stroke-width="2.6"/>
<path d="M245.9 278.3 C246.6 277.5 248.5 274.8 250.3 273.6 C252.1 272.4 255.3 270.0 256.6 271.3 C257.9 272.6 257.5 281.0 258.1 281.4 C258.8 281.8 259.3 275.4 260.5 273.6 C261.7 271.8 263.6 270.6 265.2 270.5 C266.8 270.4 268.8 271.4 269.8 272.8 C270.8 274.2 270.5 277.7 271.4 279.1 C272.3 280.5 273.8 281.2 275.3 281.4 C276.8 281.5 279.6 280.2 280.5 280.0" stroke-width="2.6"/>
<path d="M283.6 261.8 C283.7 263.6 283.7 269.0 284.1 272.3 C284.5 275.6 285.2 279.4 285.9 281.4 C286.6 283.4 287.4 284.4 288.2 284.5 C289.0 284.6 289.9 283.3 290.5 282.3 C291.1 281.3 291.6 279.2 291.8 278.6" stroke-width="2.6"/>
<path d="M277.3 271.8 C278.4 271.5 281.5 270.4 284.1 270.0 C286.8 269.6 290.6 269.5 293.2 269.5 C295.8 269.5 298.4 269.9 299.5 270.0" stroke-width="2.6"/>
<path d="M305.5 270.9 C304.7 270.8 301.9 270.1 300.5 270.5 C299.1 270.9 297.6 272.5 296.8 273.6 C296.0 274.7 295.4 276.5 295.9 277.3 C296.3 278.1 298.1 278.6 299.5 278.2 C300.9 277.8 303.0 276.3 304.1 275.0 C305.2 273.7 306.1 270.5 306.4 270.5 C306.7 270.5 305.6 273.6 305.9 275.0 C306.2 276.4 306.8 278.0 308.2 278.6 C309.6 279.2 313.1 278.8 314.1 278.8" stroke-width="2.6"/>
<path d="M320.5 270.5 C320.8 270.6 321.7 271.6 322.3 271.4 C322.9 271.2 324.1 270.1 324.1 269.5 C324.1 268.9 323.1 267.9 322.5 267.6 C321.9 267.3 321.4 267.0 320.5 267.5 C319.6 268.0 318.0 269.2 317.3 270.5 C316.6 271.8 316.0 273.6 316.4 275.0 C316.8 276.4 318.1 278.3 319.5 279.1 C320.9 279.9 323.3 280.1 325.0 280.0 C326.7 279.9 328.1 279.4 329.5 278.6 C330.9 277.8 332.1 276.7 333.2 275.0 C334.3 273.3 335.7 270.9 336.1 268.6 C336.5 266.3 336.0 263.7 335.5 261.4 C335.0 259.1 334.0 256.3 333.2 255.0 C332.4 253.7 331.7 253.0 330.9 253.6 C330.1 254.2 328.8 256.6 328.6 258.6 C328.4 260.7 328.9 263.3 329.5 265.9 C330.1 268.5 331.2 271.9 332.3 274.1 C333.4 276.3 334.7 278.1 335.9 279.1 C337.1 280.1 338.4 280.3 339.5 280.0 C340.6 279.7 342.2 277.8 342.7 277.3" stroke-width="2.6"/>
<path d="M322.5 267.6 C323.7 267.2 326.8 266.0 329.5 265.5 C332.2 265.0 335.7 264.6 338.6 264.5 C341.5 264.4 344.8 264.6 346.8 265.0 C348.9 265.4 350.1 266.1 350.9 266.8 C351.7 267.5 351.3 268.7 351.4 269.1" stroke-width="2.6"/>
<path d="M429.4 256.8 C429.6 257.1 430.4 258.1 430.9 258.8 C431.3 259.5 431.9 260.6 432.1 261.0" stroke-width="3.0"/>
<path d="M431.8 269.1 C432.0 270.1 432.8 273.3 433.2 275.0 C433.6 276.7 434.3 278.4 434.5 279.1" stroke-width="2.9"/>
<path d="M440.5 269.5 C441.3 269.2 444.2 267.6 445.5 267.7 C446.8 267.8 447.9 268.4 448.2 270.0 C448.5 271.6 447.4 276.1 447.3 277.3" stroke-width="2.7"/>
<path d="M447.3 277.3 C447.8 276.2 448.9 272.1 450.0 270.5 C451.1 268.9 452.5 267.8 453.6 267.7 C454.7 267.6 455.6 268.6 456.4 270.0 C457.2 271.4 457.4 274.3 458.2 275.9 C458.9 277.5 459.8 279.1 460.9 279.5 C461.9 279.9 463.4 279.7 464.5 278.6 C465.6 277.6 466.5 275.8 467.3 273.2 C468.1 270.6 469.0 266.2 469.1 263.2 C469.2 260.2 468.6 256.7 468.2 255.0 C467.8 253.3 467.2 252.9 466.8 253.2 C466.4 253.5 465.6 254.8 465.5 256.8 C465.4 258.8 465.9 262.0 466.4 265.0 C466.9 268.0 468.0 272.9 468.6 275.0 C469.2 277.1 469.3 278.1 470.0 277.7 C470.7 277.2 471.6 273.7 472.7 272.3 C473.8 270.9 475.3 269.3 476.4 269.1 C477.5 268.9 478.4 269.9 479.1 270.9 C479.9 271.9 480.1 274.1 480.9 275.0 C481.6 275.9 482.5 276.5 483.6 276.4 C484.7 276.2 486.2 274.9 487.3 274.1 C488.4 273.3 489.1 271.3 490.0 271.4 C490.9 271.5 491.8 273.8 492.7 274.5 C493.6 275.2 494.4 275.9 495.5 275.5 C496.6 275.1 498.3 273.3 499.1 272.3 C499.9 271.3 500.3 270.0 500.5 269.5" stroke-width="2.6"/>
<path d="M495.3 259.3 C495.4 259.4 495.6 259.7 495.7 259.8" stroke-width="2.9"/>
<path d="M511.5 254.0 C512.1 255.7 514.0 260.8 515.0 264.0 C516.0 267.2 516.3 272.1 517.5 273.0 C518.7 273.9 520.5 270.2 522.0 269.5 C523.5 268.8 525.3 268.3 526.5 268.5 C527.7 268.7 528.8 269.6 529.0 270.5 C529.2 271.4 528.9 273.2 528.0 274.0 C527.1 274.8 525.0 275.1 523.5 275.0 C522.0 274.9 519.8 273.8 519.0 273.5" stroke-width="2.7"/>
<path d="M517.5 273.0 C518.2 273.6 520.2 275.8 522.0 276.5 C523.8 277.2 526.2 277.2 528.0 277.0 C529.8 276.8 531.5 276.0 533.0 275.0 C534.5 274.0 536.2 271.8 537.0 271.0 C537.8 270.2 537.7 269.6 538.0 270.0 C538.3 270.4 538.3 272.8 539.0 273.5 C539.7 274.2 540.8 274.3 542.0 274.0 C543.2 273.7 545.3 271.9 546.0 271.5" stroke-width="2.7"/>
<path d="M540.9 256.2 C541.2 256.8 542.4 259.4 542.7 260.0" stroke-width="2.9"/>
<path d="M557.7 250.3 C557.6 251.0 557.0 253.9 556.9 254.6" stroke-width="1.6"/>
</g>
<g fill="#9a9a9a"><rect x="550.5" y="254.6" width="1" height="1"/><rect x="552.2" y="254.6" width="1" height="1"/><rect x="562" y="254.6" width="1" height="1"/><rect x="563.8" y="254.6" width="1" height="1"/><rect x="556.8" y="259.5" width="1" height="1"/><rect x="556.8" y="261.2" width="1" height="1"/></g>
</svg>

</div>
</body>
</html>
